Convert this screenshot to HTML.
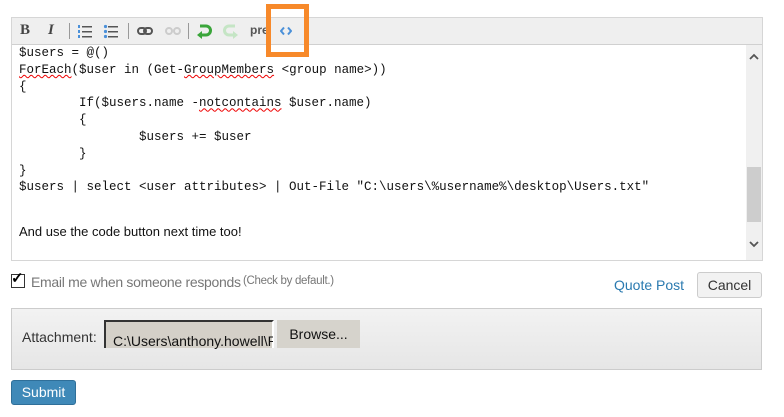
<!DOCTYPE html>
<html><head><style>
body{margin:0;width:784px;height:417px;background:#fff;position:relative;font-family:"Liberation Sans",sans-serif;overflow:hidden}
.a{position:absolute}
.ed{left:11px;top:17px;width:750px;height:242px;border:1px solid #d6d6d6}
.tb{left:0;top:0;width:750px;height:26px;background:#efefef;border-bottom:1px solid #d0d0d0}
.code{left:7px;top:27px;font-family:"Liberation Mono",monospace;font-size:12.5px;line-height:16.8px;white-space:pre;color:#111}
.sq{text-decoration:underline wavy #e00;text-decoration-thickness:1px}
.sb{left:734px;top:27px;width:16px;height:215px;background:#f0f0f0}
</style></head><body>
<div class="a ed">
 <div class="a tb">
  <span class="a" style="left:8px;top:4px;font:bold 15px 'Liberation Serif',serif;color:#444">B</span>
  <span class="a" style="left:36px;top:4px;font:italic bold 15px 'Liberation Serif',serif;color:#444">I</span>
  <div class="a" style="left:57px;top:5px;width:1px;height:16px;background:#999"></div>
  <svg class="a" style="left:65px;top:5px" width="16" height="16"><g fill="#4a90d9"><rect x="1" y="2" width="2" height="3"/><rect x="1" y="7" width="2" height="3"/><rect x="1" y="12" width="2" height="3"/></g><g fill="#555"><rect x="5" y="3" width="10" height="1.5"/><rect x="5" y="8" width="10" height="1.5"/><rect x="5" y="13" width="10" height="1.5"/></g></svg>
  <svg class="a" style="left:91px;top:5px" width="16" height="16"><g fill="#4a90d9"><circle cx="2.5" cy="3.5" r="1.6"/><circle cx="2.5" cy="8.5" r="1.6"/><circle cx="2.5" cy="13.5" r="1.6"/></g><g fill="#555"><rect x="5" y="3" width="10" height="1.5"/><rect x="5" y="8" width="10" height="1.5"/><rect x="5" y="13" width="10" height="1.5"/></g></svg>
  <div class="a" style="left:116px;top:5px;width:1px;height:16px;background:#999"></div>
  <svg class="a" style="left:125px;top:7px" width="16" height="12"><rect x="1" y="3" width="8" height="6" rx="3" fill="none" stroke="#555" stroke-width="2"/><rect x="7" y="3" width="8" height="6" rx="3" fill="none" stroke="#555" stroke-width="2"/></svg>
  <svg class="a" style="left:153px;top:6px" width="16" height="14"><rect x="1" y="4" width="6" height="6" rx="3" fill="none" stroke="#ccc" stroke-width="2"/><rect x="9" y="4" width="6" height="6" rx="3" fill="none" stroke="#ccc" stroke-width="2"/></svg>
  <div class="a" style="left:176px;top:5px;width:1px;height:16px;background:#999"></div>
  <svg class="a" style="left:184px;top:5px" width="16" height="16"><path d="M4 3h6a4.5 4.5 0 0 1 0 9H3" fill="none" stroke="#3aa53a" stroke-width="3"/><path d="M1 12l5-4v8z" fill="#3aa53a"/></svg>
  <svg class="a" style="left:211px;top:5px" width="16" height="16"><path d="M12 3H6a4.5 4.5 0 0 0 0 9h7" fill="none" stroke="#c5e5c5" stroke-width="3"/><path d="M15 12l-5-4v8z" fill="#c5e5c5"/></svg>
  <span class="a" style="left:238px;top:5px;font:bold 12px 'Liberation Sans',sans-serif;color:#555">pre</span>
  <svg class="a" style="left:268px;top:8px" width="12" height="10"><path d="M4 1.5L1 5l3 3.5M8 1.5L11 5l-3 3.5" fill="none" stroke="#4a90d9" stroke-width="2"/></svg>
 </div>
 <div class="a code">$users = @()
<span class="sq">ForEach</span>($user in (Get-<span class="sq">GroupMembers</span> &lt;group name&gt;))
{
        If($users.name -<span class="sq">notcontains</span> $user.name)
        {
                $users += $user
        }
}
$users | select &lt;user attributes&gt; | Out-File "C:\users\%username%\desktop\Users.txt"</div>
 <span class="a" style="left:7px;top:206px;font-size:13px;color:#111">And use the code button next time too!</span>
 <div class="a sb"><div class="a" style="left:1px;top:122px;width:14px;height:55px;background:#cdcdcd"></div>
  <svg class="a" style="left:3px;top:8px" width="10" height="8"><path d="M1 6l4-4 4 4" fill="none" stroke="#555" stroke-width="1.8"/></svg>
  <svg class="a" style="left:3px;top:195px" width="10" height="8"><path d="M1 2l4 4 4-4" fill="none" stroke="#555" stroke-width="1.8"/></svg>
 </div>
</div>
<div class="a" style="left:266px;top:4px;width:33px;height:43px;border:5px solid #f7892a"></div>
<div class="a" style="left:11px;top:274px;width:12px;height:12px;border:1px solid #333;background:#fff"></div>
<span class="a" style="left:11px;top:269px;font:bold 15px sans-serif;color:#000">&#10003;</span>
<span class="a" style="left:31px;top:274px;font-size:14px;color:#777;letter-spacing:-0.3px">Email me when someone responds</span>
<span class="a" style="left:243px;top:275px;font-size:11.5px;color:#777;letter-spacing:-0.3px">(Check by default.)</span>
<span class="a" style="left:614px;top:277px;font-size:14px;color:#2a7ab0">Quote Post</span>
<div class="a" style="left:697px;top:272px;width:63px;height:24px;border:1px solid #ccc;border-radius:3px;background:#f2f2f2;font-size:14px;line-height:24px;text-align:center;color:#333">Cancel</div>
<div class="a" style="left:11px;top:308px;width:749px;height:60px;border:1px solid #ccc;background:linear-gradient(#f2f2f2,#e6e6e6)"></div>
<span class="a" style="left:22px;top:329px;font-size:14px;color:#333">Attachment:</span>
<div class="a" style="left:104px;top:320px;width:170px;height:28px;background:#d4d0c8;border-top:2px solid #333;border-left:2px solid #333;border-right:2px solid #fff;box-sizing:border-box"></div>
<span class="a" style="left:113px;top:333px;font-size:14px;color:#111;width:160px;overflow:hidden;white-space:nowrap">C:\Users\anthony.howell\P</span>
<div class="a" style="left:277px;top:320px;width:83px;height:28px;background:#d6d3cc;font-size:14px;line-height:28px;text-align:center;color:#111">Browse...</div>
<div class="a" style="left:11px;top:380px;width:65px;height:25px;background:#3f89b8;border-radius:3px;border:1px solid #2f6f99;box-sizing:border-box;color:#fff;font-size:14px;line-height:23px;text-align:center">Submit</div>
</body></html>
